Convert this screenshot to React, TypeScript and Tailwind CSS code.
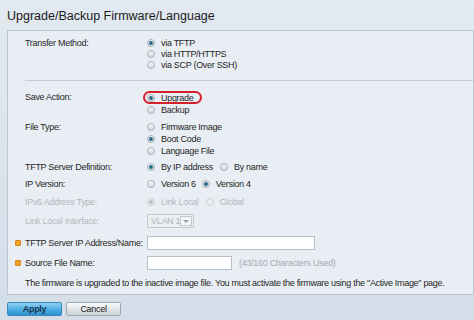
import React from 'react'

const font = { fontFamily: '"Liberation Sans", Arial, sans-serif' }

// ── Radio dot ───────────────────────────
function Radio({ checked, disabled }: { checked?: boolean; disabled?: boolean }) {
  return (
    <span
      className={`inline-flex w-[8px] h-[8px] rounded-full border items-center justify-center shrink-0 ${
        disabled ? 'border-[#c9ced4] bg-[#eef1f4]' : 'border-[#a7b0b9] bg-gradient-to-b from-[#f4f6f8] to-[#d6dce2]'
      }`}
    >
      {checked && (
        <span className={`w-[4px] h-[4px] rounded-full ${disabled ? 'bg-[#b8bec4]' : 'bg-[#2a6c88]'}`} />
      )}
    </span>
  )
}

function Opt({ label, checked, disabled, h = 'h-[12px]' }: { label: string; checked?: boolean; disabled?: boolean; h?: string }) {
  return (
    <span className={`inline-flex items-center gap-[6px] ${h}`}>
      <Radio checked={checked} disabled={disabled} />
      <span className={disabled ? 'text-[#b2b8be]' : 'text-[#1f1f1f]'}>{label}</span>
    </span>
  )
}

function Row({ label, children, className = '', muted, bullet, lh = 'h-[12px]' }: {
  label: string
  children?: React.ReactNode
  className?: string
  muted?: boolean
  bullet?: boolean
  lh?: string
}) {
  return (
    <div className={`flex ${className}`}>
      <div className={`w-[122px] shrink-0 relative flex items-center ${lh} ${muted ? 'text-[#b2b8be]' : 'text-[#1f1f1f]'}`}>
        {bullet && (
          <span className="absolute left-[-10px] top-1/2 -translate-y-1/2 w-[6px] h-[6px] rounded-[1px] bg-[#f2a128] border border-[#d9851a]" />
        )}
        <span>{label}</span>
      </div>
      <div className="flex flex-col">{children}</div>
    </div>
  )
}

export default function App() {
  return (
    <div
      className="w-[474px] h-[320px] overflow-hidden bg-gradient-to-b from-[#e2e9f0] via-[#dbe4ed] to-[#d3dee9] text-[9px] tracking-[-0.3px]"
      style={font}
    >
      <h1 className="text-[12.5px] leading-[15px] tracking-normal text-[#1a1a1a] pl-[7px] pt-[9px] h-[30px]">
        Upgrade/Backup Firmware/Language
      </h1>

      <div className="ml-[7px] border border-[#bcc6cf] bg-[#e9eef4] h-[265px] pl-[17px] pt-[6px] leading-[12px]">
        <Row label="Transfer Method:" className="items-start" lh="h-[11px]">
          <Opt label="via TFTP" checked h="h-[11px]" />
          <Opt label="via HTTP/HTTPS" h="h-[11px]" />
          <Opt label="via SCP (Over SSH)" h="h-[11px]" />
        </Row>

        <div className="border-t border-[#c2cad2] mt-[10px]" />

        <Row label="Save Action:" className="mt-[10px] items-start">
          <div className="relative">
            <span className="absolute left-[-4px] top-0 w-[59px] h-[13px] rounded-full border-2 border-[#d6202b]" />
            <Opt label="Upgrade" checked />
          </div>
          <Opt label="Backup" />
        </Row>

        <Row label="File Type:" className="mt-[5px] items-start">
          <Opt label="Firmware Image" />
          <Opt label="Boot Code" checked />
          <Opt label="Language File" />
        </Row>

        <Row label="TFTP Server Definition:" className="mt-[4px]">
          <div className="flex gap-[7px]">
            <Opt label="By IP address" checked />
            <Opt label="By name" />
          </div>
        </Row>

        <Row label="IP Version:" className="mt-[5px]">
          <div className="flex gap-[6px]">
            <Opt label="Version 6" />
            <Opt label="Version 4" checked />
          </div>
        </Row>

        <Row label="IPv6 Address Type:" className="mt-[6px]" muted>
          <div className="flex gap-[7px]">
            <Opt label="Link Local" checked disabled />
            <Opt label="Global" disabled />
          </div>
        </Row>

        <Row label="Link Local Interface:" className="mt-[6px] items-center" muted>
          <div className="flex items-center h-[14px] w-[47px] border border-[#c3c9cf] bg-[#eceff2]">
            <span className="flex-1 pl-[3px] text-[#b2b8be] whitespace-nowrap">VLAN 1</span>
            <span className="w-[12px] h-[10px] mr-[1px] border border-[#c3c9cf] bg-[#f4f6f8] flex items-center justify-center">
              <span className="w-0 h-0 border-l-[3px] border-r-[3px] border-t-[3px] border-l-transparent border-r-transparent border-t-[#9aa2aa]" />
            </span>
          </div>
        </Row>

        <Row label="TFTP Server IP Address/Name:" className="mt-[8px] items-center" bullet>
          <div className="w-[168px] h-[14px] border border-[#b7c0c8] bg-white" />
        </Row>

        <Row label="Source File Name:" className="mt-[6px] items-center" bullet>
          <div className="flex items-center gap-[7px]">
            <div className="w-[85px] h-[14px] border border-[#b7c0c8] bg-white" />
            <span className="text-[#a4aab0]">(43/160 Characters Used)</span>
          </div>
        </Row>

        <p className="mt-[7px] text-[#1f1f1f] whitespace-nowrap">
          The firmware is upgraded to the inactive image file. You must activate the firmware using the "Active Image" page.
        </p>
      </div>

      <div className="flex gap-[4px] pl-[7px] pt-[7px]">
        <button className="w-[55px] h-[14px] rounded-[2px] border border-[#3a86b8] bg-gradient-to-b from-[#8fd3f5] via-[#4fb0e4] to-[#2d90cf] text-[9px] leading-[12px] font-bold text-[#1a3656]">
          Apply
        </button>
        <button className="w-[55px] h-[14px] rounded-[2px] border border-[#9ea6ad] bg-gradient-to-b from-[#fafbfc] to-[#cdd3d8] text-[9px] leading-[12px] text-[#222]">
          Cancel
        </button>
      </div>
    </div>
  )
}
